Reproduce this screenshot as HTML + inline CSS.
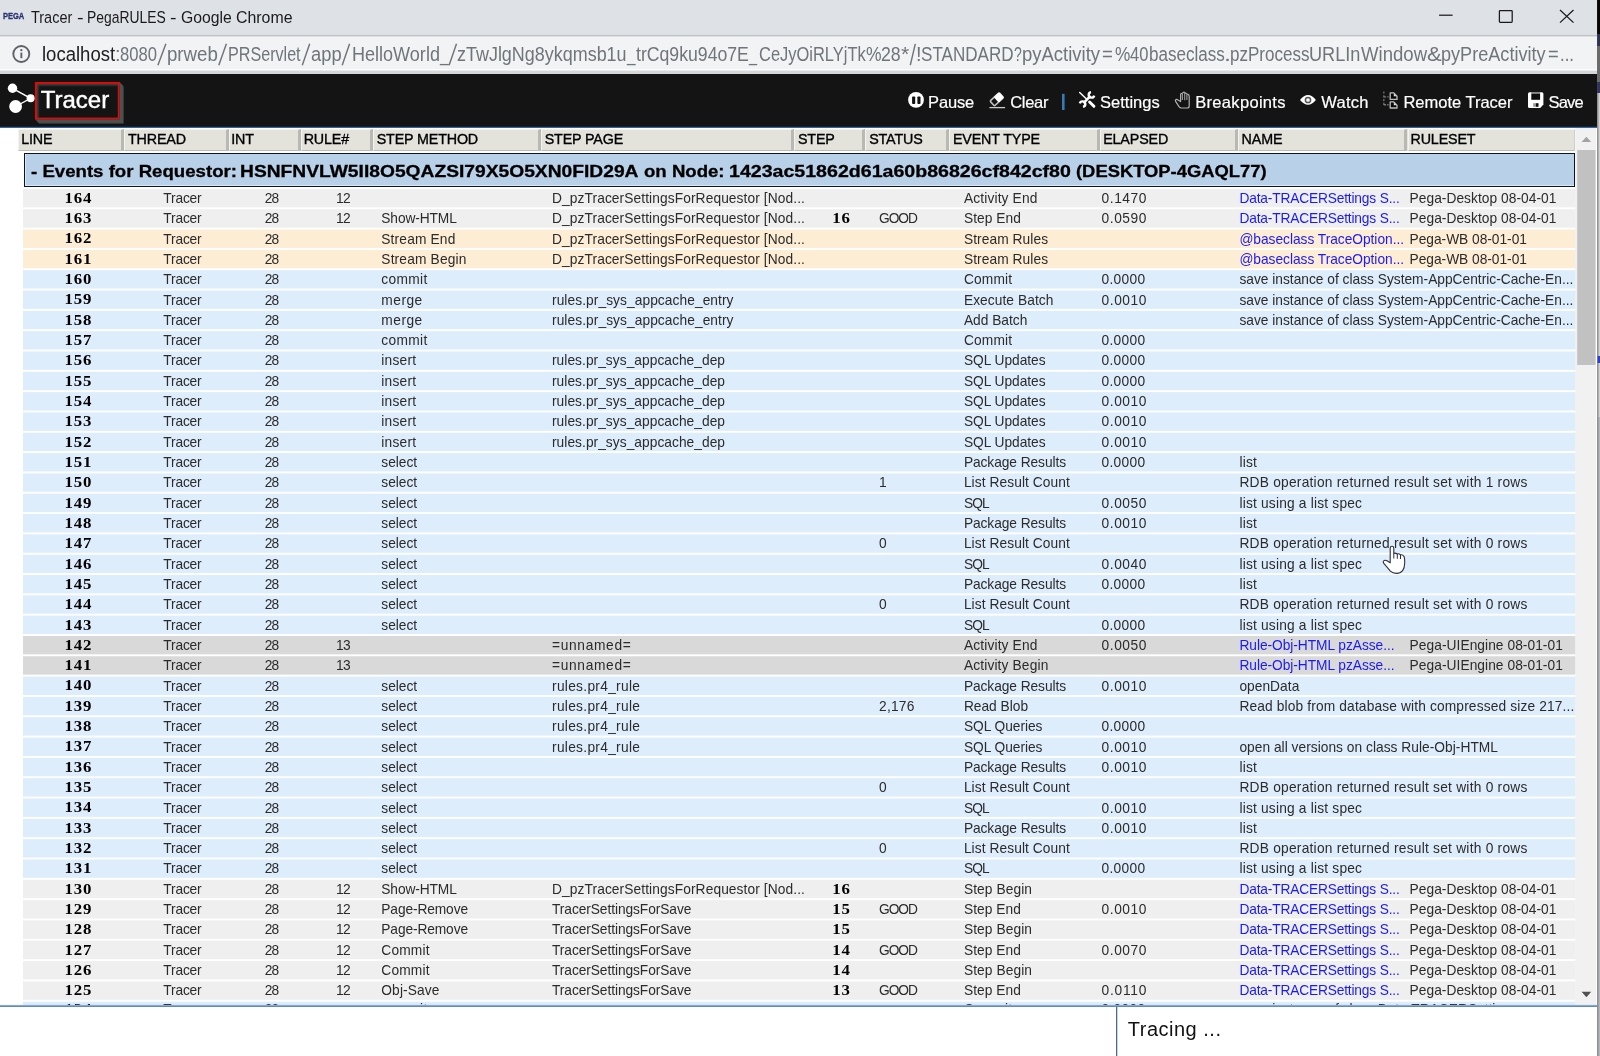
<!DOCTYPE html>
<html><head><meta charset="utf-8"><title>Tracer - PegaRULES</title>
<style>
*{margin:0;padding:0;box-sizing:border-box}
html,body{width:1600px;height:1056px;overflow:hidden;background:#fff;font-family:"Liberation Sans",sans-serif}
body{position:relative}
#all{position:absolute;left:0;top:0;width:1600px;height:1056px;will-change:transform}
i{font-style:normal}
svg{position:absolute;left:0;top:0;overflow:visible}
#titlebar{position:absolute;left:0;top:0;width:1597.3px;height:35px;background:#dee1e6}
#pega{position:absolute;left:2.8px;top:9.5px;font-size:9px;line-height:13px;font-weight:bold;color:#2a3272;-webkit-text-stroke:.3px #2a3272;transform:scaleX(.84);transform-origin:0 0;letter-spacing:-.1px}
.tt{position:absolute;top:6.7px;font-size:16.3px;line-height:20px;color:#1a1a1a;white-space:nowrap;transform-origin:0 0}
#urlbar{position:absolute;left:0;top:36.3px;width:1597.3px;height:33.1px;background:#f1f3f4}
.u{position:absolute;top:42.2px;font-size:19.6px;line-height:24px;color:#70757a;white-space:nowrap;transform-origin:0 0}
#blackbar{position:absolute;left:0;top:74px;width:1597.3px;height:52.8px;background:#141414}
#redbox{position:absolute;left:35px;top:82px;width:84.5px;height:37.3px;box-shadow:inset 3.5px 3.5px 2px #384646}
#tracer{position:absolute;left:40.7px;top:85.6px;font-size:24px;line-height:28px;color:#fff;white-space:nowrap;-webkit-text-stroke:.45px #fff}
.tb{position:absolute;top:92.3px;-webkit-text-stroke:.2px #fff;font-size:16.5px;line-height:20px;color:#fff;white-space:nowrap}
/* header */
#hdr{position:absolute;left:18px;top:128.5px;width:1557px;height:22.8px;background:#e4e4dc}
.h{position:absolute;top:0;height:22.8px;background:#e3e3db;border-top:1px solid #f4f4ee;border-left:1px solid #f4f4ee;border-right:3px solid #b9b9b3;border-bottom:1.5px solid #bcbcb6;font-size:14.3px;line-height:19.4px;color:#000;padding-left:3.2px;white-space:nowrap;overflow:hidden;letter-spacing:-.15px;-webkit-text-stroke:.35px #000}
#grp{position:absolute;left:24px;top:152.5px;width:1551px;height:34.2px;background:#b8d0e8;border:1.3px solid #10141c;box-shadow:inset 1px -1px 0 #d6e8fa}
.gt{position:absolute;top:160.8px;font-weight:bold;font-size:16.6px;line-height:22px;-webkit-text-stroke:.3px #000;white-space:pre;color:#000;transform-origin:0 0}
/* rows */
#rows{position:absolute;left:0;top:0;width:1575.5px;height:1005.6px;overflow:hidden}
.r{position:absolute;left:0;width:1575px;height:18.4px;font-size:13.75px;line-height:18.4px;color:#2b2b2b;white-space:nowrap}
.r i,.r b{position:absolute;top:1.0px;display:block}
.r b{top:-.1px;font-family:"Liberation Serif",serif;font-weight:bold;color:#000;font-size:15.6px;width:60px;text-align:center;transform:scaleX(1.08);letter-spacing:.75px;text-indent:.75px}
.c{text-align:center;width:60px}
.ln{left:48.4px}.th{left:152.4px}.in{left:241.5px}.ru{left:313.1px}.st{left:811px}
.me{left:381.3px}.pg{left:552px}.ss{left:879px}.ev{left:963.9px}.el{left:1101.5px}.nm{left:1239.4px}.rs{left:1409.6px}
.lk{color:#1a1af8}
#bottom{position:absolute;left:0;top:1005.2px;width:1597.3px;height:51px;background:#fff}
#tracing{position:absolute;left:1127.8px;top:1017.2px;font-size:20px;line-height:24px;color:#111;letter-spacing:.5px}
</style></head><body><div id="all">
<div id="titlebar"></div>
<div id="pega">PEGA</div>
<span class="tt" style="left:30.5px;transform:scaleX(0.889)">Tracer</span>
<span class="tt" style="left:76.6px;transform:scaleX(1.225)">-</span>
<span class="tt" style="left:86.8px;transform:scaleX(0.853)">PegaRULES</span>
<span class="tt" style="left:170.2px;transform:scaleX(1.200)">-</span>
<span class="tt" style="left:180.5px;transform:scaleX(0.967)">Google</span>
<span class="tt" style="left:235.5px;transform:scaleX(0.976)">Chrome</span>
<div id="urlbar"></div>
<span class="u" style="left:41.6px;transform:scaleX(0.946);color:#202124">localhost</span>
<span class="u" style="left:115.1px;transform:scaleX(1.013)">:</span>
<span class="u" style="left:119.9px;transform:scaleX(0.850)">8080</span>
<span class="u" style="left:167.2px;transform:scaleX(0.952)">prweb</span>
<span class="u" style="left:228.1px;transform:scaleX(0.823)">PRServlet</span>
<span class="u" style="left:311.1px;transform:scaleX(0.935)">app</span>
<span class="u" style="left:351.6px;transform:scaleX(0.921)">HelloWorld</span>
<span class="u" style="left:439.6px;transform:scaleX(0.791)">_</span>
<span class="u" style="left:457.4px;transform:scaleX(0.916)">zTwJlgNg8ykqmsb1u</span>
<span class="u" style="left:627.0px;transform:scaleX(0.782)">_</span>
<span class="u" style="left:636.0px;transform:scaleX(0.901)">trCq9ku94o7E</span>
<span class="u" style="left:749.3px;transform:scaleX(0.738)">_</span>
<span class="u" style="left:758.6px;transform:scaleX(0.840)">CeJyOiRLYjTk</span>
<span class="u" style="left:865.9px;transform:scaleX(0.894)">%</span>
<span class="u" style="left:881.3px;transform:scaleX(0.905)">28</span>
<span class="u" style="left:901.2px;transform:scaleX(1.091)">*</span>
<span class="u" style="left:916.1px;transform:scaleX(1.013)">!</span>
<span class="u" style="left:921.0px;transform:scaleX(0.871)">STANDARD</span>
<span class="u" style="left:1014.4px;transform:scaleX(0.714)">?</span>
<span class="u" style="left:1022.2px;transform:scaleX(0.944)">pyActivity</span>
<span class="u" style="left:1102.4px;transform:scaleX(0.947)">=</span>
<span class="u" style="left:1114.7px;transform:scaleX(0.881)">%</span>
<span class="u" style="left:1130.2px;transform:scaleX(0.844)">40</span>
<span class="u" style="left:1148.6px;transform:scaleX(0.870)">baseclass</span>
<span class="u" style="left:1223.8px;transform:scaleX(1.280)">.</span>
<span class="u" style="left:1230.2px;transform:scaleX(0.869)">pzProcess</span>
<span class="u" style="left:1309.4px;transform:scaleX(0.925)">URLIn</span>
<span class="u" style="left:1360.5px;transform:scaleX(0.948)">Window</span>
<span class="u" style="left:1426.7px;transform:scaleX(1.125)">&amp;</span>
<span class="u" style="left:1441.3px;transform:scaleX(0.924)">pyPreActivity</span>
<span class="u" style="left:1547.5px;transform:scaleX(0.937)">=</span>
<span class="u" style="left:1559.5px;transform:scaleX(0.855)">...</span>
<svg width="1600" height="80"><path d="M157.9 65.2L165.9 43.8M218.8 65.2L226.4 43.8M302.3 65.2L309.7 43.8M342.2 65.2L349.6 43.8M449.1 65.2L456.5 43.8M910.3 65.2L915.3 43.8" stroke="#70757a" stroke-width="1.45" fill="none"/></svg>
<div id="blackbar"></div>
<div id="redbox"></div><div id="tracer">Tracer</div>
<span class="tb" style="left:928.1px;letter-spacing:-0.18px">Pause</span>
<span class="tb" style="left:1010.2px;letter-spacing:-0.29px">Clear</span>
<span class="tb" style="left:1099.9px;letter-spacing:0.04px">Settings</span>
<span class="tb" style="left:1195.2px;letter-spacing:0.32px">Breakpoints</span>
<span class="tb" style="left:1321.2px;letter-spacing:0.28px">Watch</span>
<span class="tb" style="left:1403.4px;letter-spacing:-0.00px">Remote Tracer</span>
<span class="tb" style="left:1548.4px;letter-spacing:-0.74px">Save</span>
<div id="rows">
<svg width="1600" height="1056"><rect x="23" y="188.90" width="1552.6" height="18.4" fill="#efefef"/><rect x="23" y="209.22" width="1552.6" height="18.4" fill="#efefef"/><rect x="23" y="229.54" width="1552.6" height="18.4" fill="#feedd5"/><rect x="23" y="249.86" width="1552.6" height="18.4" fill="#feedd5"/><rect x="23" y="270.18" width="1552.6" height="18.4" fill="#deedfc"/><rect x="23" y="290.50" width="1552.6" height="18.4" fill="#deedfc"/><rect x="23" y="310.82" width="1552.6" height="18.4" fill="#deedfc"/><rect x="23" y="331.14" width="1552.6" height="18.4" fill="#deedfc"/><rect x="23" y="351.46" width="1552.6" height="18.4" fill="#deedfc"/><rect x="23" y="371.78" width="1552.6" height="18.4" fill="#deedfc"/><rect x="23" y="392.10" width="1552.6" height="18.4" fill="#deedfc"/><rect x="23" y="412.42" width="1552.6" height="18.4" fill="#deedfc"/><rect x="23" y="432.74" width="1552.6" height="18.4" fill="#deedfc"/><rect x="23" y="453.06" width="1552.6" height="18.4" fill="#deedfc"/><rect x="23" y="473.38" width="1552.6" height="18.4" fill="#deedfc"/><rect x="23" y="493.70" width="1552.6" height="18.4" fill="#deedfc"/><rect x="23" y="514.02" width="1552.6" height="18.4" fill="#deedfc"/><rect x="23" y="534.34" width="1552.6" height="18.4" fill="#deedfc"/><rect x="23" y="554.66" width="1552.6" height="18.4" fill="#deedfc"/><rect x="23" y="574.98" width="1552.6" height="18.4" fill="#deedfc"/><rect x="23" y="595.30" width="1552.6" height="18.4" fill="#deedfc"/><rect x="23" y="615.62" width="1552.6" height="18.4" fill="#deedfc"/><rect x="23" y="635.94" width="1552.6" height="18.4" fill="#d9d9d9"/><rect x="23" y="656.26" width="1552.6" height="18.4" fill="#d9d9d9"/><rect x="23" y="676.58" width="1552.6" height="18.4" fill="#deedfc"/><rect x="23" y="696.90" width="1552.6" height="18.4" fill="#deedfc"/><rect x="23" y="717.22" width="1552.6" height="18.4" fill="#deedfc"/><rect x="23" y="737.54" width="1552.6" height="18.4" fill="#deedfc"/><rect x="23" y="757.86" width="1552.6" height="18.4" fill="#deedfc"/><rect x="23" y="778.18" width="1552.6" height="18.4" fill="#deedfc"/><rect x="23" y="798.50" width="1552.6" height="18.4" fill="#deedfc"/><rect x="23" y="818.82" width="1552.6" height="18.4" fill="#deedfc"/><rect x="23" y="839.14" width="1552.6" height="18.4" fill="#deedfc"/><rect x="23" y="859.46" width="1552.6" height="18.4" fill="#deedfc"/><rect x="23" y="879.78" width="1552.6" height="18.4" fill="#efefef"/><rect x="23" y="900.10" width="1552.6" height="18.4" fill="#efefef"/><rect x="23" y="920.42" width="1552.6" height="18.4" fill="#efefef"/><rect x="23" y="940.74" width="1552.6" height="18.4" fill="#efefef"/><rect x="23" y="961.06" width="1552.6" height="18.4" fill="#efefef"/><rect x="23" y="981.38" width="1552.6" height="18.4" fill="#efefef"/><rect x="23" y="1001.70" width="1552.6" height="18.4" fill="#deedfc"/></svg>
<div class="r" style="top:188.90px"><b class="ln">164</b><i class="c th" style="letter-spacing:-.15px">Tracer</i><i class="c in" style="letter-spacing:-.8px">28</i><i class="c ru" style="letter-spacing:-.5px">12</i><i class="pg" style="letter-spacing:0.095px">D_pzTracerSettingsForRequestor [Nod...</i><i class="ev" style="letter-spacing:0.148px">Activity End</i><i class="el" style="letter-spacing:0.58px">0.1470</i><i class="nm lk" style="letter-spacing:-0.168px">Data-TRACERSettings S...</i><i class="rs" style="letter-spacing:0.037px">Pega-Desktop 08-04-01</i></div>
<div class="r" style="top:209.22px"><b class="ln">163</b><i class="c th" style="letter-spacing:-.15px">Tracer</i><i class="c in" style="letter-spacing:-.8px">28</i><i class="c ru" style="letter-spacing:-.5px">12</i><i class="me" style="letter-spacing:-0.109px">Show-HTML</i><i class="pg" style="letter-spacing:0.095px">D_pzTracerSettingsForRequestor [Nod...</i><b class="st">16</b><i class="ss" style="letter-spacing:-1.042px">GOOD</i><i class="ev" style="letter-spacing:0.071px">Step End</i><i class="el" style="letter-spacing:0.58px">0.0590</i><i class="nm lk" style="letter-spacing:-0.168px">Data-TRACERSettings S...</i><i class="rs" style="letter-spacing:0.037px">Pega-Desktop 08-04-01</i></div>
<div class="r" style="top:229.54px"><b class="ln">162</b><i class="c th" style="letter-spacing:-.15px">Tracer</i><i class="c in" style="letter-spacing:-.8px">28</i><i class="me" style="letter-spacing:0.153px">Stream End</i><i class="pg" style="letter-spacing:0.095px">D_pzTracerSettingsForRequestor [Nod...</i><i class="ev" style="letter-spacing:0.08px">Stream Rules</i><i class="nm lk" style="letter-spacing:-0.026px">@baseclass TraceOption...</i><i class="rs" style="letter-spacing:-0.025px">Pega-WB 08-01-01</i></div>
<div class="r" style="top:249.86px"><b class="ln">161</b><i class="c th" style="letter-spacing:-.15px">Tracer</i><i class="c in" style="letter-spacing:-.8px">28</i><i class="me" style="letter-spacing:0.159px">Stream Begin</i><i class="pg" style="letter-spacing:0.095px">D_pzTracerSettingsForRequestor [Nod...</i><i class="ev" style="letter-spacing:0.08px">Stream Rules</i><i class="nm lk" style="letter-spacing:-0.026px">@baseclass TraceOption...</i><i class="rs" style="letter-spacing:-0.025px">Pega-WB 08-01-01</i></div>
<div class="r" style="top:270.18px"><b class="ln">160</b><i class="c th" style="letter-spacing:-.15px">Tracer</i><i class="c in" style="letter-spacing:-.8px">28</i><i class="me" style="letter-spacing:0.325px">commit</i><i class="ev" style="letter-spacing:0.18px">Commit</i><i class="el" style="letter-spacing:0.3px">0.0000</i><i class="nm">save instance of class System-AppCentric-Cache-En...</i></div>
<div class="r" style="top:290.50px"><b class="ln">159</b><i class="c th" style="letter-spacing:-.15px">Tracer</i><i class="c in" style="letter-spacing:-.8px">28</i><i class="me" style="letter-spacing:0.5px">merge</i><i class="pg" style="letter-spacing:0.072px">rules.pr_sys_appcache_entry</i><i class="ev" style="letter-spacing:0.073px">Execute Batch</i><i class="el" style="letter-spacing:0.58px">0.0010</i><i class="nm">save instance of class System-AppCentric-Cache-En...</i></div>
<div class="r" style="top:310.82px"><b class="ln">158</b><i class="c th" style="letter-spacing:-.15px">Tracer</i><i class="c in" style="letter-spacing:-.8px">28</i><i class="me" style="letter-spacing:0.5px">merge</i><i class="pg" style="letter-spacing:0.072px">rules.pr_sys_appcache_entry</i><i class="ev">Add Batch</i><i class="nm">save instance of class System-AppCentric-Cache-En...</i></div>
<div class="r" style="top:331.14px"><b class="ln">157</b><i class="c th" style="letter-spacing:-.15px">Tracer</i><i class="c in" style="letter-spacing:-.8px">28</i><i class="me" style="letter-spacing:0.325px">commit</i><i class="ev" style="letter-spacing:0.18px">Commit</i><i class="el" style="letter-spacing:0.3px">0.0000</i></div>
<div class="r" style="top:351.46px"><b class="ln">156</b><i class="c th" style="letter-spacing:-.15px">Tracer</i><i class="c in" style="letter-spacing:-.8px">28</i><i class="me" style="letter-spacing:0.225px">insert</i><i class="pg" style="letter-spacing:0.042px">rules.pr_sys_appcache_dep</i><i class="ev" style="letter-spacing:-0.037px">SQL Updates</i><i class="el" style="letter-spacing:0.3px">0.0000</i></div>
<div class="r" style="top:371.78px"><b class="ln">155</b><i class="c th" style="letter-spacing:-.15px">Tracer</i><i class="c in" style="letter-spacing:-.8px">28</i><i class="me" style="letter-spacing:0.225px">insert</i><i class="pg" style="letter-spacing:0.042px">rules.pr_sys_appcache_dep</i><i class="ev" style="letter-spacing:-0.037px">SQL Updates</i><i class="el" style="letter-spacing:0.3px">0.0000</i></div>
<div class="r" style="top:392.10px"><b class="ln">154</b><i class="c th" style="letter-spacing:-.15px">Tracer</i><i class="c in" style="letter-spacing:-.8px">28</i><i class="me" style="letter-spacing:0.225px">insert</i><i class="pg" style="letter-spacing:0.042px">rules.pr_sys_appcache_dep</i><i class="ev" style="letter-spacing:-0.037px">SQL Updates</i><i class="el" style="letter-spacing:0.58px">0.0010</i></div>
<div class="r" style="top:412.42px"><b class="ln">153</b><i class="c th" style="letter-spacing:-.15px">Tracer</i><i class="c in" style="letter-spacing:-.8px">28</i><i class="me" style="letter-spacing:0.225px">insert</i><i class="pg" style="letter-spacing:0.042px">rules.pr_sys_appcache_dep</i><i class="ev" style="letter-spacing:-0.037px">SQL Updates</i><i class="el" style="letter-spacing:0.58px">0.0010</i></div>
<div class="r" style="top:432.74px"><b class="ln">152</b><i class="c th" style="letter-spacing:-.15px">Tracer</i><i class="c in" style="letter-spacing:-.8px">28</i><i class="me" style="letter-spacing:0.225px">insert</i><i class="pg" style="letter-spacing:0.042px">rules.pr_sys_appcache_dep</i><i class="ev" style="letter-spacing:-0.037px">SQL Updates</i><i class="el" style="letter-spacing:0.58px">0.0010</i></div>
<div class="r" style="top:453.06px"><b class="ln">151</b><i class="c th" style="letter-spacing:-.15px">Tracer</i><i class="c in" style="letter-spacing:-.8px">28</i><i class="me" style="letter-spacing:-0.025px">select</i><i class="ev" style="letter-spacing:-0.071px">Package Results</i><i class="el" style="letter-spacing:0.3px">0.0000</i><i class="nm" style="letter-spacing:0.208px">list</i></div>
<div class="r" style="top:473.38px"><b class="ln">150</b><i class="c th" style="letter-spacing:-.15px">Tracer</i><i class="c in" style="letter-spacing:-.8px">28</i><i class="me" style="letter-spacing:-0.025px">select</i><i class="ss">1</i><i class="ev" style="letter-spacing:0.078px">List Result Count</i><i class="nm" style="letter-spacing:0.239px">RDB operation returned result set with 1 rows</i></div>
<div class="r" style="top:493.70px"><b class="ln">149</b><i class="c th" style="letter-spacing:-.15px">Tracer</i><i class="c in" style="letter-spacing:-.8px">28</i><i class="me" style="letter-spacing:-0.025px">select</i><i class="ev" style="letter-spacing:-0.875px">SQL</i><i class="el" style="letter-spacing:0.58px">0.0050</i><i class="nm" style="letter-spacing:0.196px">list using a list spec</i></div>
<div class="r" style="top:514.02px"><b class="ln">148</b><i class="c th" style="letter-spacing:-.15px">Tracer</i><i class="c in" style="letter-spacing:-.8px">28</i><i class="me" style="letter-spacing:-0.025px">select</i><i class="ev" style="letter-spacing:-0.071px">Package Results</i><i class="el" style="letter-spacing:0.58px">0.0010</i><i class="nm" style="letter-spacing:0.208px">list</i></div>
<div class="r" style="top:534.34px"><b class="ln">147</b><i class="c th" style="letter-spacing:-.15px">Tracer</i><i class="c in" style="letter-spacing:-.8px">28</i><i class="me" style="letter-spacing:-0.025px">select</i><i class="ss">0</i><i class="ev" style="letter-spacing:0.078px">List Result Count</i><i class="nm" style="letter-spacing:0.239px">RDB operation returned result set with 0 rows</i></div>
<div class="r" style="top:554.66px"><b class="ln">146</b><i class="c th" style="letter-spacing:-.15px">Tracer</i><i class="c in" style="letter-spacing:-.8px">28</i><i class="me" style="letter-spacing:-0.025px">select</i><i class="ev" style="letter-spacing:-0.875px">SQL</i><i class="el" style="letter-spacing:0.58px">0.0040</i><i class="nm" style="letter-spacing:0.196px">list using a list spec</i></div>
<div class="r" style="top:574.98px"><b class="ln">145</b><i class="c th" style="letter-spacing:-.15px">Tracer</i><i class="c in" style="letter-spacing:-.8px">28</i><i class="me" style="letter-spacing:-0.025px">select</i><i class="ev" style="letter-spacing:-0.071px">Package Results</i><i class="el" style="letter-spacing:0.3px">0.0000</i><i class="nm" style="letter-spacing:0.208px">list</i></div>
<div class="r" style="top:595.30px"><b class="ln">144</b><i class="c th" style="letter-spacing:-.15px">Tracer</i><i class="c in" style="letter-spacing:-.8px">28</i><i class="me" style="letter-spacing:-0.025px">select</i><i class="ss">0</i><i class="ev" style="letter-spacing:0.078px">List Result Count</i><i class="nm" style="letter-spacing:0.239px">RDB operation returned result set with 0 rows</i></div>
<div class="r" style="top:615.62px"><b class="ln">143</b><i class="c th" style="letter-spacing:-.15px">Tracer</i><i class="c in" style="letter-spacing:-.8px">28</i><i class="me" style="letter-spacing:-0.025px">select</i><i class="ev" style="letter-spacing:-0.875px">SQL</i><i class="el" style="letter-spacing:0.3px">0.0000</i><i class="nm" style="letter-spacing:0.196px">list using a list spec</i></div>
<div class="r" style="top:635.94px"><b class="ln">142</b><i class="c th" style="letter-spacing:-.15px">Tracer</i><i class="c in" style="letter-spacing:-.8px">28</i><i class="c ru" style="letter-spacing:-.5px">13</i><i class="pg" style="letter-spacing:0.672px">=unnamed=</i><i class="ev" style="letter-spacing:0.148px">Activity End</i><i class="el" style="letter-spacing:0.58px">0.0050</i><i class="nm lk" style="letter-spacing:-0.045px">Rule-Obj-HTML pzAsse...</i><i class="rs" style="letter-spacing:0.054px">Pega-UIEngine 08-01-01</i></div>
<div class="r" style="top:656.26px"><b class="ln">141</b><i class="c th" style="letter-spacing:-.15px">Tracer</i><i class="c in" style="letter-spacing:-.8px">28</i><i class="c ru" style="letter-spacing:-.5px">13</i><i class="pg" style="letter-spacing:0.672px">=unnamed=</i><i class="ev" style="letter-spacing:0.144px">Activity Begin</i><i class="nm lk" style="letter-spacing:-0.045px">Rule-Obj-HTML pzAsse...</i><i class="rs" style="letter-spacing:0.054px">Pega-UIEngine 08-01-01</i></div>
<div class="r" style="top:676.58px"><b class="ln">140</b><i class="c th" style="letter-spacing:-.15px">Tracer</i><i class="c in" style="letter-spacing:-.8px">28</i><i class="me" style="letter-spacing:-0.025px">select</i><i class="pg" style="letter-spacing:0.298px">rules.pr4_rule</i><i class="ev" style="letter-spacing:-0.071px">Package Results</i><i class="el" style="letter-spacing:0.58px">0.0010</i><i class="nm" style="letter-spacing:0.036px">openData</i></div>
<div class="r" style="top:696.90px"><b class="ln">139</b><i class="c th" style="letter-spacing:-.15px">Tracer</i><i class="c in" style="letter-spacing:-.8px">28</i><i class="me" style="letter-spacing:-0.025px">select</i><i class="pg" style="letter-spacing:0.298px">rules.pr4_rule</i><i class="ss" style="letter-spacing:0.25px">2,176</i><i class="ev">Read Blob</i><i class="nm" style="letter-spacing:0.14px">Read blob from database with compressed size 217...</i></div>
<div class="r" style="top:717.22px"><b class="ln">138</b><i class="c th" style="letter-spacing:-.15px">Tracer</i><i class="c in" style="letter-spacing:-.8px">28</i><i class="me" style="letter-spacing:-0.025px">select</i><i class="pg" style="letter-spacing:0.298px">rules.pr4_rule</i><i class="ev" style="letter-spacing:-0.037px">SQL Queries</i><i class="el" style="letter-spacing:0.3px">0.0000</i></div>
<div class="r" style="top:737.54px"><b class="ln">137</b><i class="c th" style="letter-spacing:-.15px">Tracer</i><i class="c in" style="letter-spacing:-.8px">28</i><i class="me" style="letter-spacing:-0.025px">select</i><i class="pg" style="letter-spacing:0.298px">rules.pr4_rule</i><i class="ev" style="letter-spacing:-0.037px">SQL Queries</i><i class="el" style="letter-spacing:0.58px">0.0010</i><i class="nm" style="letter-spacing:0.026px">open all versions on class Rule-Obj-HTML</i></div>
<div class="r" style="top:757.86px"><b class="ln">136</b><i class="c th" style="letter-spacing:-.15px">Tracer</i><i class="c in" style="letter-spacing:-.8px">28</i><i class="me" style="letter-spacing:-0.025px">select</i><i class="ev" style="letter-spacing:-0.071px">Package Results</i><i class="el" style="letter-spacing:0.58px">0.0010</i><i class="nm" style="letter-spacing:0.208px">list</i></div>
<div class="r" style="top:778.18px"><b class="ln">135</b><i class="c th" style="letter-spacing:-.15px">Tracer</i><i class="c in" style="letter-spacing:-.8px">28</i><i class="me" style="letter-spacing:-0.025px">select</i><i class="ss">0</i><i class="ev" style="letter-spacing:0.078px">List Result Count</i><i class="nm" style="letter-spacing:0.239px">RDB operation returned result set with 0 rows</i></div>
<div class="r" style="top:798.50px"><b class="ln">134</b><i class="c th" style="letter-spacing:-.15px">Tracer</i><i class="c in" style="letter-spacing:-.8px">28</i><i class="me" style="letter-spacing:-0.025px">select</i><i class="ev" style="letter-spacing:-0.875px">SQL</i><i class="el" style="letter-spacing:0.58px">0.0010</i><i class="nm" style="letter-spacing:0.196px">list using a list spec</i></div>
<div class="r" style="top:818.82px"><b class="ln">133</b><i class="c th" style="letter-spacing:-.15px">Tracer</i><i class="c in" style="letter-spacing:-.8px">28</i><i class="me" style="letter-spacing:-0.025px">select</i><i class="ev" style="letter-spacing:-0.071px">Package Results</i><i class="el" style="letter-spacing:0.58px">0.0010</i><i class="nm" style="letter-spacing:0.208px">list</i></div>
<div class="r" style="top:839.14px"><b class="ln">132</b><i class="c th" style="letter-spacing:-.15px">Tracer</i><i class="c in" style="letter-spacing:-.8px">28</i><i class="me" style="letter-spacing:-0.025px">select</i><i class="ss">0</i><i class="ev" style="letter-spacing:0.078px">List Result Count</i><i class="nm" style="letter-spacing:0.239px">RDB operation returned result set with 0 rows</i></div>
<div class="r" style="top:859.46px"><b class="ln">131</b><i class="c th" style="letter-spacing:-.15px">Tracer</i><i class="c in" style="letter-spacing:-.8px">28</i><i class="me" style="letter-spacing:-0.025px">select</i><i class="ev" style="letter-spacing:-0.875px">SQL</i><i class="el" style="letter-spacing:0.3px">0.0000</i><i class="nm" style="letter-spacing:0.196px">list using a list spec</i></div>
<div class="r" style="top:879.78px"><b class="ln">130</b><i class="c th" style="letter-spacing:-.15px">Tracer</i><i class="c in" style="letter-spacing:-.8px">28</i><i class="c ru" style="letter-spacing:-.5px">12</i><i class="me" style="letter-spacing:-0.109px">Show-HTML</i><i class="pg" style="letter-spacing:0.095px">D_pzTracerSettingsForRequestor [Nod...</i><b class="st">16</b><i class="ev" style="letter-spacing:0.083px">Step Begin</i><i class="nm lk" style="letter-spacing:-0.168px">Data-TRACERSettings S...</i><i class="rs" style="letter-spacing:0.037px">Pega-Desktop 08-04-01</i></div>
<div class="r" style="top:900.10px"><b class="ln">129</b><i class="c th" style="letter-spacing:-.15px">Tracer</i><i class="c in" style="letter-spacing:-.8px">28</i><i class="c ru" style="letter-spacing:-.5px">12</i><i class="me" style="letter-spacing:-0.113px">Page-Remove</i><i class="pg" style="letter-spacing:-0.075px">TracerSettingsForSave</i><b class="st">15</b><i class="ss" style="letter-spacing:-1.042px">GOOD</i><i class="ev" style="letter-spacing:0.071px">Step End</i><i class="el" style="letter-spacing:0.58px">0.0010</i><i class="nm lk" style="letter-spacing:-0.168px">Data-TRACERSettings S...</i><i class="rs" style="letter-spacing:0.037px">Pega-Desktop 08-04-01</i></div>
<div class="r" style="top:920.42px"><b class="ln">128</b><i class="c th" style="letter-spacing:-.15px">Tracer</i><i class="c in" style="letter-spacing:-.8px">28</i><i class="c ru" style="letter-spacing:-.5px">12</i><i class="me" style="letter-spacing:-0.113px">Page-Remove</i><i class="pg" style="letter-spacing:-0.075px">TracerSettingsForSave</i><b class="st">15</b><i class="ev" style="letter-spacing:0.083px">Step Begin</i><i class="nm lk" style="letter-spacing:-0.168px">Data-TRACERSettings S...</i><i class="rs" style="letter-spacing:0.037px">Pega-Desktop 08-04-01</i></div>
<div class="r" style="top:940.74px"><b class="ln">127</b><i class="c th" style="letter-spacing:-.15px">Tracer</i><i class="c in" style="letter-spacing:-.8px">28</i><i class="c ru" style="letter-spacing:-.5px">12</i><i class="me" style="letter-spacing:0.18px">Commit</i><i class="pg" style="letter-spacing:-0.075px">TracerSettingsForSave</i><b class="st">14</b><i class="ss" style="letter-spacing:-1.042px">GOOD</i><i class="ev" style="letter-spacing:0.071px">Step End</i><i class="el" style="letter-spacing:0.58px">0.0070</i><i class="nm lk" style="letter-spacing:-0.168px">Data-TRACERSettings S...</i><i class="rs" style="letter-spacing:0.037px">Pega-Desktop 08-04-01</i></div>
<div class="r" style="top:961.06px"><b class="ln">126</b><i class="c th" style="letter-spacing:-.15px">Tracer</i><i class="c in" style="letter-spacing:-.8px">28</i><i class="c ru" style="letter-spacing:-.5px">12</i><i class="me" style="letter-spacing:0.18px">Commit</i><i class="pg" style="letter-spacing:-0.075px">TracerSettingsForSave</i><b class="st">14</b><i class="ev" style="letter-spacing:0.083px">Step Begin</i><i class="nm lk" style="letter-spacing:-0.168px">Data-TRACERSettings S...</i><i class="rs" style="letter-spacing:0.037px">Pega-Desktop 08-04-01</i></div>
<div class="r" style="top:981.38px"><b class="ln">125</b><i class="c th" style="letter-spacing:-.15px">Tracer</i><i class="c in" style="letter-spacing:-.8px">28</i><i class="c ru" style="letter-spacing:-.5px">12</i><i class="me" style="letter-spacing:0.125px">Obj-Save</i><i class="pg" style="letter-spacing:-0.075px">TracerSettingsForSave</i><b class="st">13</b><i class="ss" style="letter-spacing:-1.042px">GOOD</i><i class="ev" style="letter-spacing:0.071px">Step End</i><i class="el" style="letter-spacing:0.78px">0.0110</i><i class="nm lk" style="letter-spacing:-0.168px">Data-TRACERSettings S...</i><i class="rs" style="letter-spacing:0.037px">Pega-Desktop 08-04-01</i></div>
<div class="r" style="top:999.70px"><b class="ln">124</b><i class="c th" style="letter-spacing:-.15px">Tracer</i><i class="c in" style="letter-spacing:-.8px">28</i><i class="me" style="letter-spacing:0.325px">commit</i><i class="ev" style="letter-spacing:0.18px">Commit</i><i class="el" style="letter-spacing:0.3px">0.0000</i><i class="nm">save instance of class Data-TRACERSettings...</i></div>
</div>
<div id="hdr">
<div class="h" style="left:0px;width:106px;padding-left:2.2px">LINE</div>
<div class="h" style="left:106px;width:105px;padding-left:3px">THREAD</div>
<div class="h" style="left:211px;width:72px;padding-left:1.2px">INT</div>
<div class="h" style="left:283px;width:71.5px;padding-left:1.7px">RULE#</div>
<div class="h" style="left:354.5px;width:168px">STEP METHOD</div>
<div class="h" style="left:522.5px;width:253.25px">STEP PAGE</div>
<div class="h" style="left:775.75px;width:71.25px">STEP</div>
<div class="h" style="left:847px;width:83.75px">STATUS</div>
<div class="h" style="left:930.75px;width:151.25px">EVENT TYPE</div>
<div class="h" style="left:1082px;width:138.4px;padding-left:2.2px">ELAPSED</div>
<div class="h" style="left:1220.4px;width:169.1px;padding-left:2.2px">NAME</div>
<div class="h" style="left:1389.5px;width:167.5px;border-right:1px solid #d0d0ca;padding-left:2px">RULESET</div>
</div>
<div id="grp"></div>
<span class="gt" style="left:30.5px;transform:scaleX(1.1225)">- Events for Requestor:</span>
<span class="gt" style="left:239.9px;transform:scaleX(1.1585)">HSNFNVLW5II8O5QAZSI79X5O5XN0FID29A</span>
<span class="gt" style="left:644.1px;transform:scaleX(1.1203)">on Node:</span>
<span class="gt" style="left:728.8px;transform:scaleX(1.1800)">1423ac51862d61a60b86826cf842cf80</span>
<span class="gt" style="left:1076.2px;transform:scaleX(1.1073)">(DESKTOP-4GAQL77)</span>
<div id="bottom"></div>
<div id="tracing">Tracing ...</div>
<svg width="1600" height="1056">
<!-- chrome lines -->
<rect x="0" y="34.9" width="1597.3" height="1.5" fill="#c0c2c6"/>
<rect x="0" y="69.3" width="1597.3" height="1.2" fill="#fbfbfb"/>
<rect x="0" y="70.5" width="1597.3" height="3.5" fill="#d5d7d9"/>
<rect x="0" y="126.8" width="1597.3" height="1.2" fill="#2f65a5"/>
<!-- info icon -->
<circle cx="21.3" cy="54" r="8" fill="none" stroke="#5f6368" stroke-width="1.9"/>
<rect x="20.4" y="52.6" width="1.9" height="5.6" fill="#5f6368"/><circle cx="21.35" cy="50.2" r="1.15" fill="#5f6368"/>
<!-- window controls -->
<g stroke="#1a1a1a" stroke-width="1.25" fill="none">
<path d="M1439.1 15.2H1452.6"/>
<rect x="1499.4" y="10.5" width="12.8" height="11.8" rx=".8"/>
<path d="M1560 10L1573.5 22.6M1573.5 10L1560 22.6"/>
</g>
<!-- tracer logo -->
<rect x="35.85" y="82.85" width="82.8" height="35.6" fill="none" stroke="#f80000" stroke-width="1.7"/>
<path d="M119.5 82L123.6 86.2V123.4H39.2L35 119.3H119.5Z" fill="#4b5151"/>
<g fill="#fff" stroke="none">
<circle cx="12.5" cy="88.3" r="4.7"/><circle cx="15.6" cy="106.5" r="6.4"/><circle cx="30.6" cy="98.3" r="4"/>
</g>
<path d="M12.5 88.3L30.6 98.3L15.6 106.5" stroke="#fff" stroke-width="1.4" fill="none"/>
<!-- pause -->
<circle cx="916" cy="99.9" r="7.9" fill="#fff"/>
<rect x="912.1" y="96.5" width="3.1" height="7.5" rx=".8" fill="#111"/><rect x="917.4" y="96.5" width="3.1" height="7.5" rx=".8" fill="#111"/>
<!-- eraser -->
<g transform="translate(996.8 99.3) rotate(-43)"><rect x="-6.2" y="-3.3" width="12.4" height="6.6" rx="1" fill="none" stroke="#c0c0c0" stroke-width="1.6"/><rect x="-.8" y="-3.7" width="7.4" height="7.4" rx="1.2" fill="#fff"/></g>
<path d="M989.4 107.6H1005.1" stroke="#c8c8c8" stroke-width="1.3"/>
<!-- separator -->
<rect x="1062" y="93.8" width="2.6" height="16.2" fill="#3b78b5"/>
<!-- settings -->
<g stroke="#fff" fill="none" stroke-linecap="round">
<path d="M1079.7 92.5L1087 99.5" stroke-width="1.5"/>
<path d="M1089.6 102L1093.9 106.3" stroke-width="3"/>
<path d="M1084.2 102.4L1089.8 96.6" stroke-width="2.5"/>
<path d="M1091 92.1A2.8 2.8 0 1 0 1094.2 95.6" stroke-width="2.4" stroke-linecap="butt"/>
<path d="M1083 106.9A2.8 2.8 0 1 0 1079.8 103.4" stroke-width="2.4" stroke-linecap="butt"/>
</g>
<!-- hand -->
<path d="M1180.6 101.6V94.6Q1180.6 93.4 1181.8 93.4L1183.2 92.4Q1184 91.8 1184.8 92.4L1186.2 93.4L1188 94.4Q1189.2 95 1189.2 96.4V106Q1189.2 108 1187.2 108H1181.4Q1180 108 1179 106.6L1175.6 101.4Q1175 100.2 1176 99.6Q1177 99 1178 100Z" fill="none" stroke="#b0b0b0" stroke-width="1.2" stroke-linejoin="round"/>
<path d="M1182.4 93.6V100M1184.7 92.6V100.2M1186.9 94V100" stroke="#9a9a9a" stroke-width="1.1" fill="none"/>
<!-- eye -->
<path d="M1300 100Q1304 95.1 1308 95.1Q1312 95.1 1315.9 100Q1312 104.8 1308 104.8Q1304 104.8 1300 100Z" fill="#fff"/>
<circle cx="1308" cy="100" r="2.6" fill="none" stroke="#555" stroke-width="1.5"/>
<!-- remote -->
<path d="M1383.8 91.4V105" stroke="#6a6a6a" stroke-width="1.4" stroke-dasharray="2.2 1.6" fill="none"/>
<path d="M1383.8 96.9H1388.6M1383.8 104.7H1388.6" stroke="#7a7a7a" stroke-width="1.4" stroke-dasharray="2.2 1.2" fill="none"/>
<path d="M1390.2 92.9H1393.8L1397 96.2V99.4H1390.2Z" fill="#0a0a0a" stroke="#bdbdbd" stroke-width="1.3" stroke-linejoin="round"/>
<path d="M1390.2 101.9H1393.8L1397 105.2V108H1390.2Z" fill="#0a0a0a" stroke="#bdbdbd" stroke-width="1.3" stroke-linejoin="round"/>
<path d="M1393.8 93.4L1396.6 96.2H1393.8Z" fill="#e6e6e6"/><path d="M1393.8 102.4L1396.6 105.2H1393.8Z" fill="#e6e6e6"/>
<!-- save -->
<path d="M1529.6 92.2H1541.8Q1543.4 92.2 1543.4 93.8V104.6L1540.2 108H1529.6Q1528 108 1528 106.4V93.8Q1528 92.2 1529.6 92.2Z" fill="#fff"/>
<rect x="1531.3" y="92.2" width="8.8" height="1.9" fill="#777"/>
<rect x="1531.3" y="94" width="8.8" height="5.8" fill="#0c0c0c"/>
<rect x="1533.2" y="103.2" width="2.7" height="3.6" fill="#999"/><rect x="1535.9" y="103.2" width="2.6" height="3.6" fill="#111"/>

<!-- scrollbar -->
<rect x="1575.3" y="128.1" width="20.7" height="876.9" fill="#f1f1f1"/>
<rect x="1577.2" y="150" width="18.3" height="215" fill="#c1c1c1"/>
<path d="M1586.4 136.8L1591.2 141.9H1581.6Z" fill="#a3a3a3"/>
<path d="M1586.4 997.2L1591.2 991.8H1581.6Z" fill="#505050"/>
<!-- bottom -->
<rect x="0" y="1004.9" width="1597.3" height="1" fill="#86a9d3"/><rect x="0" y="1005.8" width="1597.3" height="1.2" fill="#5f8bc0"/>
<rect x="1116" y="1007" width="1.3" height="49" fill="#4a6a98"/>
<!-- right strip -->
<rect x="1597.1" y="0" width="2.9" height="417" fill="#d2d2d2"/>
<rect x="1597.1" y="417" width="2.9" height="639" fill="#b4b6bc"/>
<rect x="1597.1" y="0" width="1.4" height="1056" fill="#8c8c8e"/>
<rect x="1597.1" y="0" width="2.9" height="34" fill="#050505"/>
<rect x="1597.1" y="34" width="2.9" height="12" fill="#2d3250"/>
<rect x="1597.1" y="46" width="2.9" height="36" fill="#6a6a6a"/>
<rect x="1597.1" y="82" width="2.9" height="11" fill="#30345a"/>
<rect x="1597.6" y="356" width="2.4" height="7" fill="#2a40d0"/>
<!-- mouse cursor -->
<path d="M1390.2 548.2Q1390.2 546.3 1392 546.3Q1393.8 546.3 1393.8 548.2V553.6Q1395.6 552.6 1397.2 554Q1399 553.2 1400.4 554.8Q1402.6 554.4 1404 556.4Q1404.8 558 1404.7 563Q1404.6 568 1402.6 570.6Q1400.4 573.4 1396.4 573.4Q1392.6 573.4 1390.4 571.2L1383.6 563.2Q1382.6 561.6 1384 560.6Q1385.4 559.8 1387 560.8L1390.2 562.8Z" fill="#fff" stroke="#2a2f45" stroke-width="1.1" stroke-linejoin="round"/>
<path d="M1393.8 553.6V558.5M1397.3 554V558.8M1400.5 554.8V559" stroke="#2a2f45" stroke-width="1" fill="none"/>
</svg>
</div></body></html>
